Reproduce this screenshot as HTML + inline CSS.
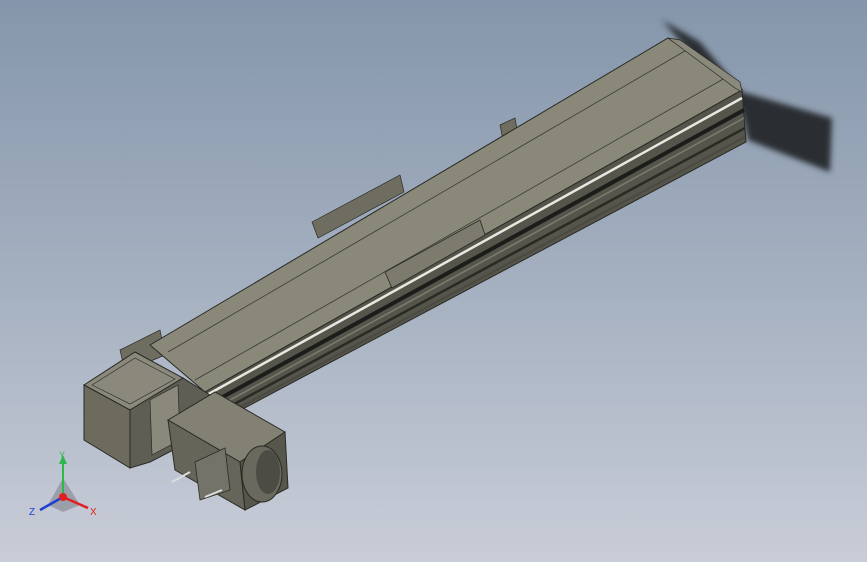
<!DOCTYPE html>
<html><head><style>
html,body{margin:0;padding:0;width:867px;height:562px;overflow:hidden}
body{background:linear-gradient(180deg,#8596ab 0%,#a4b0c0 50%,#c9cdd8 100%)}
svg{position:absolute;left:0;top:0}
</style></head><body>
<svg width="867" height="562" viewBox="0 0 867 562">
<defs><filter id="b" x="-20%" y="-20%" width="140%" height="140%"><feGaussianBlur stdDeviation="3"/></filter></defs>
<!-- shadow -->
<polygon points="662,20 700,42 742,92 832,118 830,172 748,140 742,112" fill="#2a2e33" filter="url(#b)"/>
<!-- tabs behind -->
<polygon points="312,222 400,175 404,192 318,238" fill="#6e6d60" stroke="#2a2a25" stroke-width="0.7"/>
<polygon points="500,125 515,118 518,135 503,140" fill="#6e6d60" stroke="#2a2a25" stroke-width="0.7"/>
<polygon points="120,350 160,330 165,355 125,372" fill="#6e6d60" stroke="#2a2a25" stroke-width="0.7"/>
<!-- main top face -->
<polygon points="150,345 668,38 742,90 205,392" fill="#898879" stroke="#2a2a25" stroke-width="1"/>
<line x1="168" y1="352" x2="690" y2="48" stroke="#3a3a33" stroke-width="0.8"/>
<line x1="195" y1="380" x2="725" y2="78" stroke="#3a3a33" stroke-width="0.8"/>
<!-- side face -->
<polygon points="205,392 742,90 746,142 218,422" fill="#56554c" stroke="#2a2a25" stroke-width="1"/>
<line x1="205" y1="396" x2="742" y2="98" stroke="#e8e8e0" stroke-width="2.5"/>
<line x1="210" y1="404" x2="744" y2="110" stroke="#1c1c1a" stroke-width="4"/>
<line x1="212" y1="410" x2="744" y2="118" stroke="#7d7c70" stroke-width="1.5"/>
<line x1="214" y1="415" x2="745" y2="128" stroke="#2a2a25" stroke-width="2.5"/>
<line x1="216" y1="420" x2="745" y2="137" stroke="#4a4a42" stroke-width="2"/>
<!-- carriage block -->
<polygon points="385,272 480,220 485,235 392,288" fill="#7c7b6e" stroke="#2a2a25" stroke-width="0.8"/>
<!-- far end cap -->
<polygon points="668,38 680,40 740,82 742,92 735,88" fill="#8a897c" stroke="#2a2a25" stroke-width="0.7"/>
<!-- near gearbox block -->
<polygon points="84,385 135,352 183,378 130,410" fill="#8a897c" stroke="#2a2a25" stroke-width="1"/>
<polygon points="92,385 135,358 175,379 130,404" fill="none" stroke="#2a2a25" stroke-width="0.6"/>
<polygon points="84,385 130,410 130,468 84,440" fill="#6c6b5e" stroke="#2a2a25" stroke-width="1"/>
<polygon points="130,410 183,378 210,395 212,430 150,462 130,468" fill="#5f5e54" stroke="#2a2a25" stroke-width="1"/>
<polygon points="150,400 178,385 180,440 152,455" fill="#8a897c" stroke="#2a2a25" stroke-width="0.7"/>
<!-- motor -->
<polygon points="168,420 215,392 285,432 240,462" fill="#828174" stroke="#2a2a25" stroke-width="1"/>
<polygon points="168,420 240,462 245,510 175,470" fill="#66655a" stroke="#2a2a25" stroke-width="1"/>
<polygon points="240,462 285,432 288,488 245,510" fill="#57564d" stroke="#2a2a25" stroke-width="1"/>
<ellipse cx="262" cy="474" rx="20" ry="28" fill="#6a695e" stroke="#2a2a25" stroke-width="1"/>
<ellipse cx="268" cy="472" rx="12" ry="22" fill="#4c4b44"/>
<polygon points="195,462 225,448 230,490 200,500" fill="#74736a" stroke="#2a2a25" stroke-width="0.8"/>
<line x1="172" y1="482" x2="190" y2="472" stroke="#ddd" stroke-width="2"/>
<line x1="205" y1="497" x2="222" y2="490" stroke="#ddd" stroke-width="2"/>
<!-- triad -->
<polygon points="48,505 63,478 80,505 63,512" fill="#8a8e98" opacity="0.7"/>
<line x1="63" y1="495" x2="63" y2="462" stroke="#2db84a" stroke-width="2"/>
<polygon points="59,464 63,455 67,464" fill="#2db84a"/>
<line x1="63" y1="497" x2="88" y2="508" stroke="#e02020" stroke-width="2.5"/>
<line x1="63" y1="497" x2="40" y2="510" stroke="#2040d0" stroke-width="2.5"/>
<circle cx="63" cy="497" r="4" fill="#e02020"/>
<text x="59" y="458" font-family="Liberation Sans,sans-serif" font-size="9" fill="#2db84a">Y</text>
<text x="90" y="515" font-family="Liberation Sans,sans-serif" font-size="10" fill="#e02020">X</text>
<text x="29" y="515" font-family="Liberation Sans,sans-serif" font-size="10" fill="#2040d0">Z</text>
</svg>
</body></html>
